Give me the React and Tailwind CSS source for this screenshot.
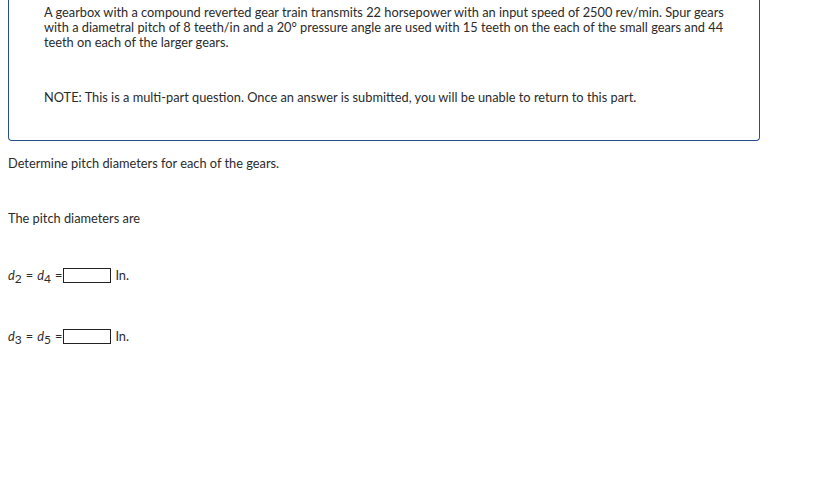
import React from 'react'

function AnswerRow({ a, b }) {
  return (
    <div className="flex items-center text-[12.8px] text-[#2b2b2b]">
      <span className="italic">d</span>
      <sub className="text-[12px] leading-none">{a}</sub>
      <span className="mx-[4px]">=</span>
      <span className="italic">d</span>
      <sub className="text-[12px] leading-none">{b}</sub>
      <span className="ml-[4px] mr-[1px]">=</span>
      <input
        type="text"
        className="h-[15px] w-[48px] border border-[#222] bg-white outline-none"
      />
      <span className="ml-[4px]">In.</span>
    </div>
  )
}

export default function App() {
  return (
    <div
      className="h-[483px] w-[821px] bg-white text-[#2b2b2b]"
      style={{ fontFamily: 'Lato, "Open Sans", Arial, sans-serif' }}
    >
      <div className="ml-[8px] w-[752px] rounded-b-[4px] border border-t-0 border-[#24508a] pb-[35px] pl-[35px] pr-[20px] pt-[5px] text-[12.8px] leading-[15px]">
        <p>
          A gearbox with a compound reverted gear train transmits 22 horsepower with an input speed of 2500 rev/min. Spur gears
          with a diametral pitch of 8 teeth/in and a 20° pressure angle are used with 15 teeth on the each of the small gears and 44
          teeth on each of the larger gears.
        </p>
        <p className="mt-[40px]">
          NOTE: This is a multi-part question. Once an answer is submitted, you will be unable to return to this part.
        </p>
      </div>

      <div className="px-[8px] text-[12.8px] leading-[15px]">
        <p className="mt-[15px]">Determine pitch diameters for each of the gears.</p>
        <p className="mt-[40px]">The pitch diameters are</p>
        <div className="mt-[42px]">
          <AnswerRow a="2" b="4" />
        </div>
        <div className="mt-[46px]">
          <AnswerRow a="3" b="5" />
        </div>
      </div>
    </div>
  )
}
